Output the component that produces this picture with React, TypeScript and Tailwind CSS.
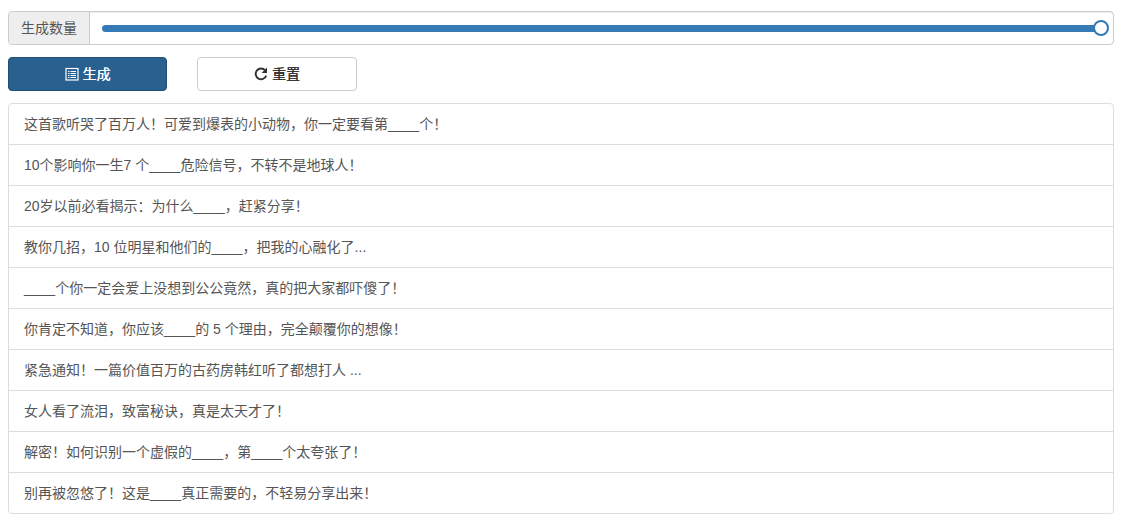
import React from 'react';

const titles = [
  '这首歌听哭了百万人！可爱到爆表的小动物，你一定要看第____个！',
  '10个影响你一生7 个____危险信号，不转不是地球人！',
  '20岁以前必看揭示：为什么____，赶紧分享！',
  '教你几招，10 位明星和他们的____，把我的心融化了...',
  '____个你一定会爱上没想到公公竟然，真的把大家都吓傻了！',
  '你肯定不知道，你应该____的 5 个理由，完全颠覆你的想像！',
  '紧急通知！一篇价值百万的古药房韩红听了都想打人 ...',
  '女人看了流泪，致富秘诀，真是太天才了！',
  '解密！如何识别一个虚假的____，第____个太夸张了！',
  '别再被忽悠了！这是____真正需要的，不轻易分享出来！',
];

const ListIcon = () => (
  <svg width="14" height="14" viewBox="0 0 14 14" className="shrink-0">
    <rect x="1" y="1.5" width="12" height="11.5" fill="none" stroke="currentColor" strokeWidth="1.2" />
    <path d="M3 4.5h1.5M5.5 4.5H11M3 6.5h1.5M5.5 6.5H11M3 8.5h1.5M5.5 8.5H11M3 10.5h1.5M5.5 10.5H11" stroke="currentColor" strokeWidth="1.2" />
  </svg>
);

const RefreshIcon = () => (
  <svg width="14" height="14" viewBox="0 0 14 14" className="shrink-0">
    <path d="M11.2 3.4A5.4 5.4 0 1 0 12.2 8.6" fill="none" stroke="currentColor" strokeWidth="1.9" />
    <path d="M13 0.6V6H7.6Z" fill="currentColor" />
  </svg>
);

export default function App() {
  return (
    <div className="w-[1124px] h-[523px] bg-white px-2 pt-[11px] overflow-hidden text-[14px] leading-[20px] text-[#555] font-['Liberation_Sans','Noto_Sans_CJK_SC',sans-serif]">
      {/* Slider */}
      <div className="flex h-[34px] w-[1106px] rounded border border-[#ccc] shadow-[inset_0_1px_1px_rgba(0,0,0,0.075)]">
        <div className="w-[81px] shrink-0 flex items-center justify-center bg-[#eee] border-r border-[#ccc] rounded-l">
          生成数量
        </div>
        <div className="flex-1 flex items-center pl-3 pr-[4px]">
          <div className="flex-1 h-[7px] bg-[#337ab7] rounded-l" />
          <div className="w-4 h-4 rounded-full border-2 border-[#337ab7] bg-white -ml-px shrink-0" />
        </div>
      </div>

      {/* Buttons */}
      <div className="flex gap-[30px] mt-3">
        <button className="w-[159px] h-[34px] flex items-center justify-center gap-1 rounded bg-[#286090] border border-[#204d74] text-white">
          <ListIcon />
          <span className="[text-shadow:0.3px_0_0_currentColor]">生成</span>
        </button>
        <button className="w-[160px] h-[34px] flex items-center justify-center gap-1 rounded bg-white border border-[#ccc] text-[#333]">
          <RefreshIcon />
          <span className="[text-shadow:0.3px_0_0_currentColor]">重置</span>
        </button>
      </div>

      {/* Results */}
      <ul className="mt-3 w-[1106px] rounded border border-[#ddd]">
        {titles.map((t, i) => (
          <li key={i} className="h-[41px] px-[15px] pt-[10px] border-b border-[#ddd] last:border-b-0 last:h-[40px] whitespace-pre">
            {t}
          </li>
        ))}
      </ul>
    </div>
  );
}
